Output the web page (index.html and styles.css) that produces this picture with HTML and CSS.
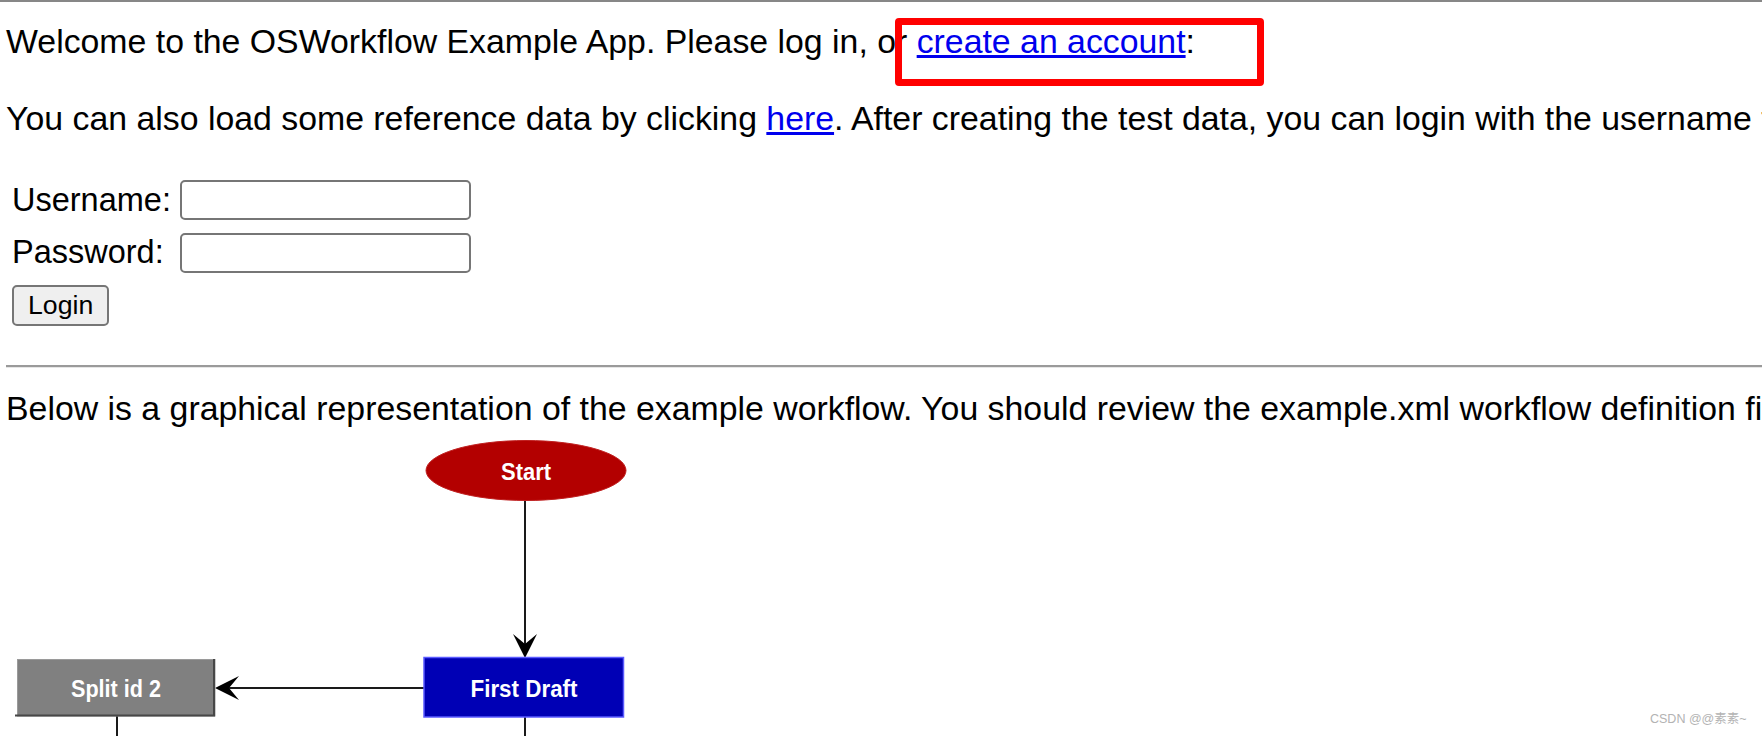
FILE: index.html
```html
<!DOCTYPE html>
<html lang="en">
<head>
<meta charset="utf-8">
<title>OSWorkflow Example App</title>
<link rel="stylesheet" href="styles.css">
</head>
<body>
<p class="intro">Welcome to the OSWorkflow Example App. Please log in, or <a href="#">create an account</a>:</p>
<p class="intro second">You can also load some reference data by clicking <a href="#">here</a>. After creating the test data, you can login with the username <b>test</b> and password <b>test</b>.</p>
<form class="login">
  <label class="lbl">Username:</label><input class="field" type="text">
  <label class="lbl">Password:</label><input class="field" type="password">
  <button class="btn" type="button">Login</button>
</form>
<hr class="divider">
<p class="below">Below is a graphical representation of the example workflow. You should review the example.xml workflow definition file to understand how the workflow is defined.</p>
<svg class="diagram" width="640" height="306" viewBox="0 0 640 306" xmlns="http://www.w3.org/2000/svg">
  <line class="edge" x1="519" y1="70" x2="519" y2="218"/>
  <path class="head" d="M519,228 L507,204 L519,214 L531,204 Z"/>
  <line class="edge" x1="221" y1="258" x2="418" y2="258"/>
  <path class="head" d="M209,258 L233,246 L223,258 L233,270 Z"/>
  <line class="edge" x1="111" y1="286" x2="111" y2="310"/>
  <line class="edge" x1="519" y1="287" x2="519" y2="310"/>

  <ellipse class="n-start" cx="520" cy="40.5" rx="100" ry="30"/>
  <text class="n-label" x="520" y="41" textLength="50" lengthAdjust="spacingAndGlyphs">Start</text>

  <rect class="n-step" x="418" y="227.5" width="199.5" height="59.5"/>
  <text class="n-label" x="518" y="258" textLength="107" lengthAdjust="spacingAndGlyphs">First Draft</text>

  <rect class="n-split" x="11.5" y="229.5" width="197.5" height="56.5"/>
  <line class="n-split-shade" x1="208" y1="229" x2="208" y2="286"/>
  <line class="n-split-shade" x1="9" y1="285.5" x2="209" y2="285.5"/>
  <text class="n-label" x="110" y="258" textLength="90" lengthAdjust="spacingAndGlyphs">Split id 2</text>
</svg>
<div class="highlight"></div>
<div class="watermark">CSDN @@素素~</div>
</body>
</html>
```
FILE: styles.css
```css
html, body {
  overflow: hidden;
}

body {
  margin: 0;
  padding-left: 6px;
  height: 734px;
  border-top: 2px solid #878787;
  background: #fff;
  color: #000;
  font-family: "Liberation Sans", Arial, Helvetica, sans-serif;
  font-size: 33.85px;
  line-height: 38px;
}

p {
  margin: 0;
  white-space: nowrap;
}

a {
  color: #0000ee;
  text-decoration: underline;
}

b {
  font-weight: normal;
}

.intro {
  margin-top: 20px;
}

.second {
  margin-top: 39px;
}

.login {
  display: grid;
  grid-template-columns: max-content 291px;
  column-gap: 9px;
  row-gap: 12.5px;
  align-items: center;
  width: max-content;
  margin: 43px 0 0 6px;
  font-size: 32.5px;
}

.lbl {
  line-height: 37px;
}

.field {
  box-sizing: border-box;
  width: 291px;
  height: 40px;
  margin: 0;
  padding: 0 4px;
  border: 2px solid #767676;
  border-radius: 5px;
  background: #fff;
  font: inherit;
}

.btn {
  grid-column: 1 / span 2;
  justify-self: start;
  box-sizing: border-box;
  height: 41px;
  margin: 0;
  padding: 0 14px;
  border: 2px solid #767676;
  border-radius: 5px;
  background: #efefef;
  color: #000;
  font-family: "Liberation Sans", Arial, Helvetica, sans-serif;
  font-size: 26.67px;
  line-height: normal;
}

.divider {
  height: 0;
  margin: 39px 0 0;
  border: 0;
  border-top: 2px solid #9a9a9a;
  border-bottom: 1px solid #e6e6e6;
}

.below {
  margin-top: 21px;
}

.diagram {
  display: block;
  margin-top: 3px;
  overflow: visible;
}

.edge {
  stroke: #1a1a1a;
  stroke-width: 2;
}

.head {
  fill: #000;
}

.n-start {
  fill: #b30000;
  stroke: #c02020;
  stroke-width: 1;
}

.n-step {
  fill: #0000b5;
  stroke: #5a5aff;
  stroke-width: 1.5;
}

.n-split {
  fill: #808080;
  stroke: #9a9a9a;
  stroke-width: 1;
}

.n-split-shade {
  stroke: #474747;
  stroke-width: 2;
}

.n-label {
  fill: #fff;
  font-family: "Liberation Sans", Arial, sans-serif;
  font-size: 24px;
  font-weight: bold;
  text-anchor: middle;
  dominant-baseline: central;
}

.highlight {
  position: absolute;
  left: 895px;
  top: 18px;
  box-sizing: border-box;
  width: 369px;
  height: 68px;
  border: 7px solid #ff0000;
  border-radius: 4px;
}

.watermark {
  position: absolute;
  left: 1650px;
  top: 712px;
  color: #b3b3b3;
  font-family: "Liberation Sans", "Noto Sans CJK SC", sans-serif;
  font-size: 12.5px;
  line-height: 15px;
  white-space: nowrap;
}
```
